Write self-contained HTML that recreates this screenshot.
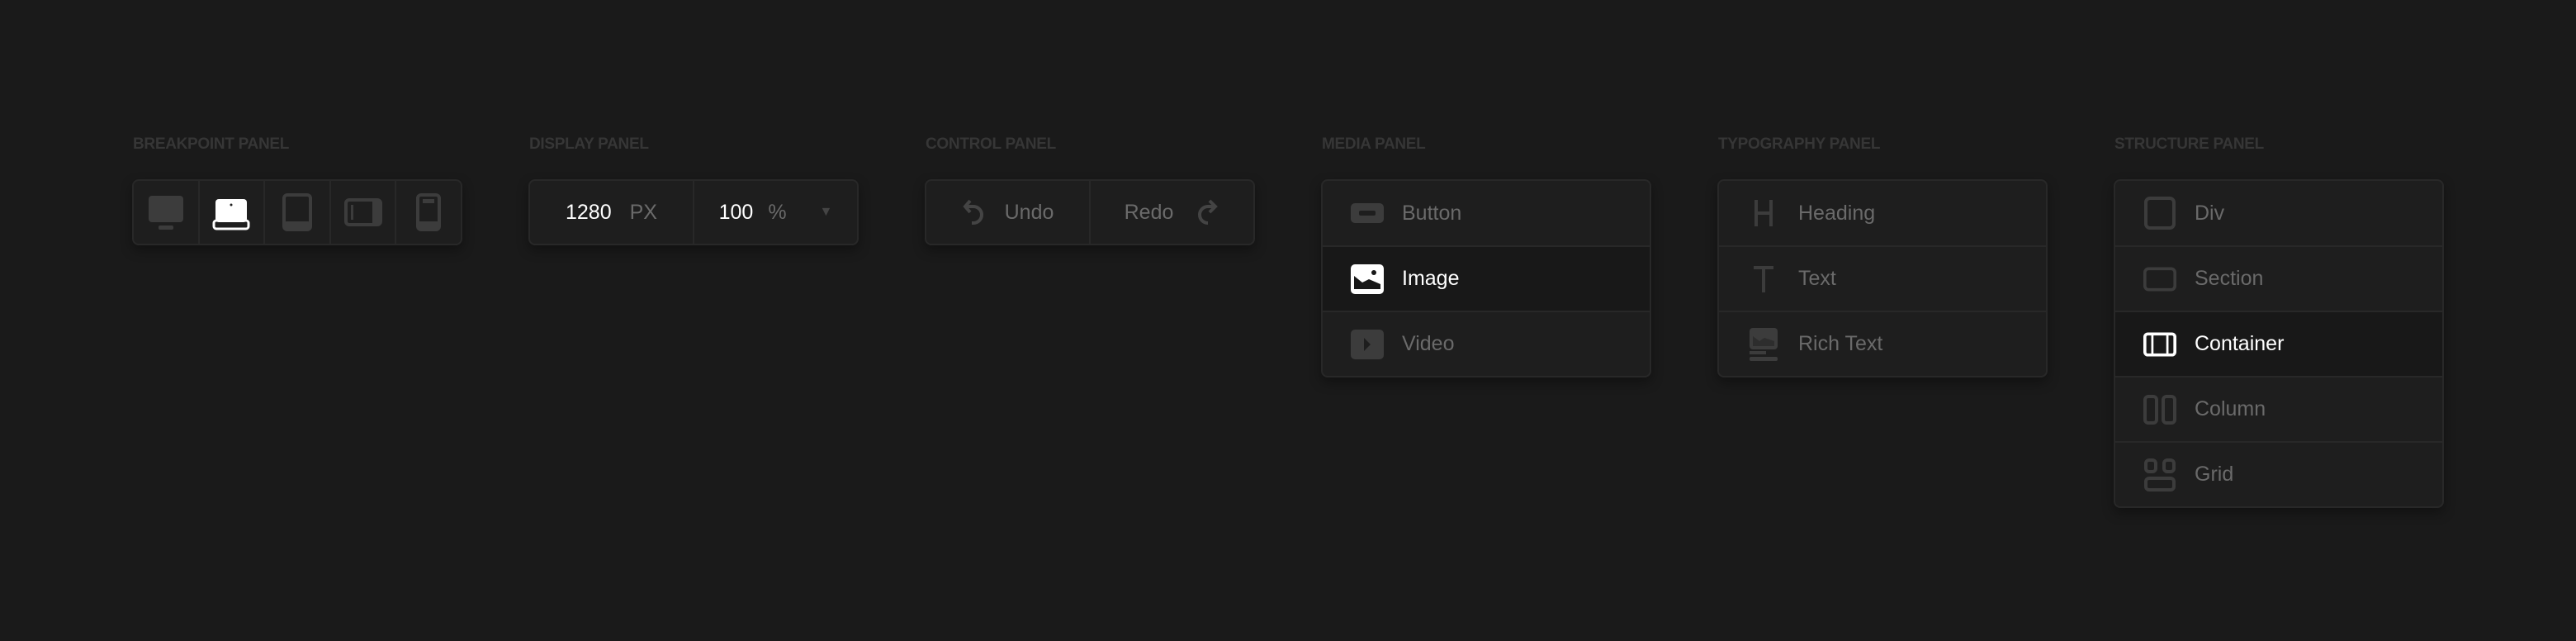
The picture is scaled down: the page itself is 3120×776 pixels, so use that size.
<!DOCTYPE html>
<html><head><meta charset="utf-8"><style>
*{box-sizing:border-box;margin:0;padding:0}
body{width:3120px;height:776px;background:#1a1a1a;font-family:"Liberation Sans",sans-serif;position:relative;overflow:hidden}
.lbl{position:absolute;top:164px;font-size:19px;font-weight:bold;color:#363636;letter-spacing:-0.3px}
.panel{position:absolute;top:217px;width:400px;background:#1e1e1e;border:2px solid #282828;border-radius:8px;box-shadow:0 6px 14px rgba(0,0,0,.35);overflow:hidden}
.row{height:79px;display:flex;align-items:center;border-top:2px solid #282828;font-size:25px;color:#6a6a6a}
.row:first-child{border-top:none;height:78px}
.row.sel{background:#181818;color:#fff}
.row .ic{width:40px;height:40px;margin-left:34px;margin-right:22px;display:flex;align-items:center;justify-content:center}
.hz{display:flex;height:76px}
.hz>div{flex:1;display:flex;align-items:center;justify-content:center;border-left:2px solid #282828;font-size:25px;color:#6a6a6a}
.hz>div:first-child{border-left:none}
</style></head><body>
<div class="lbl" style="left:161px">BREAKPOINT PANEL</div>
<div class="lbl" style="left:641px">DISPLAY PANEL</div>
<div class="lbl" style="left:1121px">CONTROL PANEL</div>
<div class="lbl" style="left:1601px">MEDIA PANEL</div>
<div class="lbl" style="left:2081px">TYPOGRAPHY PANEL</div>
<div class="lbl" style="left:2561px">STRUCTURE PANEL</div>

<div class="panel" style="left:160px;height:80px">
 <div class="hz">
  <div><svg width="46" height="44" viewBox="0 0 46 44"><rect x="2" y="2" width="42" height="32" rx="4" fill="#3c3c3c"/><rect x="14" y="38" width="18" height="5" rx="2" fill="#3c3c3c"/></svg></div>
  <div><svg width="46" height="44" viewBox="0 0 46 44"><rect x="4" y="6" width="38" height="28" rx="4" fill="#fff"/><rect x="2" y="32" width="42" height="10" rx="3" fill="none" stroke="#fff" stroke-width="3"/><circle cx="23" cy="13" r="1.5" fill="#222"/></svg></div>
  <div><svg width="36" height="46" viewBox="0 0 36 46"><rect x="2" y="2" width="32" height="42" rx="4" fill="none" stroke="#3c3c3c" stroke-width="4"/><rect x="2" y="34" width="32" height="10" rx="3" fill="#3c3c3c"/></svg></div>
  <div><svg width="46" height="34" viewBox="0 0 46 34"><rect x="2" y="2" width="42" height="30" rx="4" fill="none" stroke="#3c3c3c" stroke-width="4"/><rect x="8" y="8" width="3" height="18" fill="#3c3c3c"/><rect x="34" y="2" width="10" height="30" fill="#3c3c3c"/></svg></div>
  <div><svg width="30" height="46" viewBox="0 0 30 46"><rect x="2" y="2" width="26" height="42" rx="4" fill="none" stroke="#3c3c3c" stroke-width="4"/><rect x="8" y="7" width="14" height="5" fill="#3c3c3c"/><rect x="2" y="34" width="26" height="10" fill="#3c3c3c"/></svg></div>
 </div>
</div>

<div class="panel" style="left:640px;height:80px">
 <div class="hz">
  <div><span style="color:#fff">1280</span><span style="margin-left:22px">PX</span></div>
  <div><span style="color:#fff">100</span><span style="margin-left:18px">%</span><span style="margin-left:40px;color:#444;font-size:16px">▼</span></div>
 </div>
</div>

<div class="panel" style="left:1120px;height:80px">
 <div class="hz">
  <div><svg width="30" height="36" viewBox="0 0 30 36"><path d="M10 4 L4 11 L10 18" fill="none" stroke="#444" stroke-width="4"/><path d="M5 11 H14 A10 10 0 0 1 14 31 H12" fill="none" stroke="#444" stroke-width="4"/></svg><span style="margin-left:22px">Undo</span></div>
  <div><span style="margin-right:26px">Redo</span><svg width="30" height="36" viewBox="0 0 30 36"><path d="M18 4 L25 11 L18 18" fill="none" stroke="#444" stroke-width="4"/><path d="M24 11 H16 A10 10 0 0 0 16 31" fill="none" stroke="#444" stroke-width="4"/></svg></div>
 </div>
</div>

<div class="panel" style="left:1600px">
 <div class="row"><div class="ic"><svg width="40" height="24" viewBox="0 0 40 24"><rect x="0" y="0" width="40" height="24" rx="5" fill="#3c3c3c"/><rect x="10" y="9" width="20" height="6" rx="2" fill="#1e1e1e"/></svg></div>Button</div>
 <div class="row sel"><div class="ic"><svg width="40" height="36" viewBox="0 0 40 36"><rect x="0" y="0" width="40" height="36" rx="5" fill="#fff"/><path d="M4 30 V14 L14 22 L22 18 L36 24 V30 Z" fill="#181818"/><circle cx="28" cy="10" r="3" fill="#181818"/></svg></div>Image</div>
 <div class="row"><div class="ic"><svg width="40" height="36" viewBox="0 0 40 36"><rect x="0" y="0" width="40" height="36" rx="5" fill="#3c3c3c"/><path d="M16 10 L24 18 L16 26 Z" fill="#1e1e1e"/></svg></div>Video</div>
</div>

<div class="panel" style="left:2080px">
 <div class="row"><div class="ic"><svg width="24" height="32" viewBox="0 0 24 32"><path d="M3 0V32M21 0V32M3 16H21" stroke="#3c3c3c" stroke-width="4"/></svg></div>Heading</div>
 <div class="row"><div class="ic"><svg width="24" height="32" viewBox="0 0 24 32"><path d="M0 2H24M12 2V32" stroke="#3c3c3c" stroke-width="4"/></svg></div>Text</div>
 <div class="row"><div class="ic"><svg width="36" height="40" viewBox="0 0 36 40"><rect x="1" y="0" width="34" height="26" rx="4" fill="#3c3c3c"/><path d="M5 22V10L13 16L19 12L31 16V22Z" fill="#1e1e1e" opacity=".5"/><rect x="1" y="28" width="20" height="4" fill="#3c3c3c"/><rect x="1" y="35" width="34" height="5" rx="2" fill="#3c3c3c"/></svg></div>Rich Text</div>
</div>

<div class="panel" style="left:2560px">
 <div class="row"><div class="ic"><svg width="40" height="40" viewBox="0 0 40 40"><rect x="3" y="2" width="34" height="36" rx="5" fill="none" stroke="#3c3c3c" stroke-width="4"/></svg></div>Div</div>
 <div class="row"><div class="ic"><svg width="44" height="32" viewBox="0 0 44 32"><rect x="2" y="2" width="40" height="28" rx="5" fill="none" stroke="#3c3c3c" stroke-width="4"/></svg></div>Section</div>
 <div class="row sel"><div class="ic"><svg width="44" height="32" viewBox="0 0 44 32"><rect x="2" y="2" width="40" height="28" rx="4" fill="none" stroke="#fff" stroke-width="4"/><path d="M12 2V30M32 2V30" stroke="#fff" stroke-width="3"/></svg></div>Container</div>
 <div class="row"><div class="ic"><svg width="40" height="36" viewBox="0 0 40 36"><rect x="2" y="2" width="14" height="32" rx="4" fill="none" stroke="#3c3c3c" stroke-width="4"/><rect x="24" y="2" width="14" height="32" rx="4" fill="none" stroke="#3c3c3c" stroke-width="4"/></svg></div>Column</div>
 <div class="row"><div class="ic"><svg width="38" height="40" viewBox="0 0 38 40"><rect x="2" y="2" width="12" height="14" rx="4" fill="none" stroke="#3c3c3c" stroke-width="4"/><rect x="24" y="2" width="12" height="14" rx="4" fill="none" stroke="#3c3c3c" stroke-width="4"/><rect x="2" y="24" width="34" height="14" rx="4" fill="none" stroke="#3c3c3c" stroke-width="4"/></svg></div>Grid</div>
</div>
</body></html>
